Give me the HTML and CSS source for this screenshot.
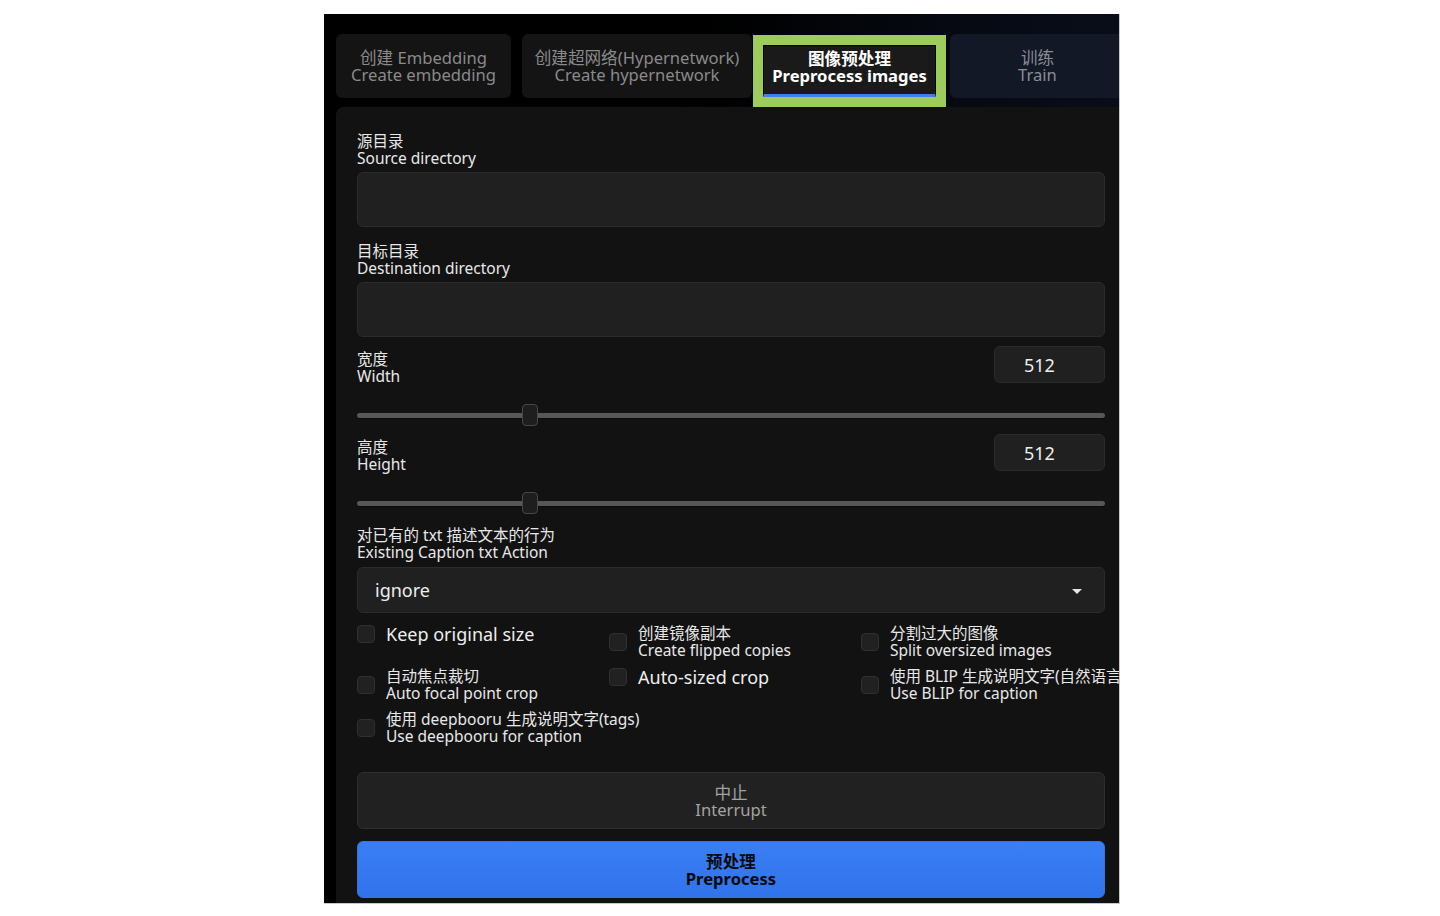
FILE: index.html
```html
<!DOCTYPE html>
<html lang="zh">
<head>
<meta charset="utf-8">
<title>Preprocess images</title>
<link rel="stylesheet" href="styles.css">
</head>
<body>
<div class="frame">
  <div class="tabs">
    <div class="tab tab-a"><span>创建 Embedding</span><span>Create embedding</span></div>
    <div class="tab tab-b"><span>创建超网络(Hypernetwork)</span><span>Create hypernetwork</span></div>
    <div class="tab-sel"><span>图像预处理</span><span>Preprocess images</span></div>
    <div class="tab tab-d"><span>训练</span><span>Train</span></div>
  </div>
  <div class="panel">
    <div class="field">
      <div class="label"><span>源目录</span><span>Source directory</span></div>
      <div class="textbox"></div>
    </div>
    <div class="field field-last">
      <div class="label"><span>目标目录</span><span>Destination directory</span></div>
      <div class="textbox"></div>
    </div>
    <div class="slider-block">
      <div class="slider-head">
        <div class="label label-top"><span>宽度</span><span>Width</span></div>
        <div class="numbox">512</div>
      </div>
      <div class="slider">
        <div class="track"></div>
        <div class="rail"><div class="thumb" style="left: 22.58%"></div></div>
      </div>
    </div>
    <div class="slider-block">
      <div class="slider-head">
        <div class="label label-top"><span>高度</span><span>Height</span></div>
        <div class="numbox">512</div>
      </div>
      <div class="slider">
        <div class="track"></div>
        <div class="rail"><div class="thumb" style="left: 22.58%"></div></div>
      </div>
    </div>
    <div class="field field-dd">
      <div class="label"><span>对已有的 txt 描述文本的行为</span><span>Existing Caption txt Action</span></div>
      <div class="dropdown"><span class="dd-value">ignore</span><span class="dd-arrow"></span></div>
    </div>
    <div class="checks">
      <div class="check"><span class="box"></span><span class="ck-single">Keep original size</span></div>
      <div class="check"><span class="box"></span><span class="ck-double"><span>创建镜像副本</span><span>Create flipped copies</span></span></div>
      <div class="check"><span class="box"></span><span class="ck-double"><span>分割过大的图像</span><span>Split oversized images</span></span></div>
      <div class="check"><span class="box"></span><span class="ck-double"><span>自动焦点裁切</span><span>Auto focal point crop</span></span></div>
      <div class="check"><span class="box"></span><span class="ck-single">Auto-sized crop</span></div>
      <div class="check"><span class="box"></span><span class="ck-double"><span>使用 BLIP 生成说明文字(自然语言)</span><span>Use BLIP for caption</span></span></div>
      <div class="check"><span class="box"></span><span class="ck-double"><span>使用 deepbooru 生成说明文字(tags)</span><span>Use deepbooru for caption</span></span></div>
    </div>
    <div class="btn btn-interrupt"><span>中止</span><span>Interrupt</span></div>
    <div class="btn btn-primary"><span>预处理</span><span>Preprocess</span></div>
  </div>
</div>
</body>
</html>
```
FILE: styles.css
```css
* { box-sizing: border-box; }
html, body { margin: 0; padding: 0; background: #ffffff; }
body {
  font-family: "Noto Sans", "Noto Sans CJK SC", sans-serif;
  color: #e6e6e6;
}
.frame {
  margin: 14px 0 0 324px;
  width: 796px;
  height: 890px;
  overflow: hidden;
  background: linear-gradient(90deg, #000000 0%, #000000 45%, #060a14 100%);
  border-right: 1px solid #c8c8c8;
  border-bottom: 1px solid #c8c8c8;
}
.tabs {
  display: flex;
  align-items: flex-start;
  height: 93px;
  padding: 20px 0 0 12px;
  background: linear-gradient(90deg, rgba(0,0,0,0) 0%, rgba(0,0,0,0) 55%, rgba(10,15,28,0.6) 100%);
}
.tab {
  flex: 0 0 auto;
  height: 64px;
  border-radius: 6px;
  display: flex;
  flex-direction: column;
  align-items: center;
  justify-content: center;
  font-size: 16.6px;
  line-height: 17px;
  color: #8a8a8a;
  background: #141414;
  white-space: nowrap;
}
.tab-a { width: 175px; }
.tab-b { width: 230px; margin-left: 11px; background: #141415; }
.tab-d { width: 175px; margin-left: 14px; background: #121826; color: #8a8d94; }
.tab-sel {
  flex: 0 0 auto;
  width: 173px;
  height: 52px;
  margin: 11px 0 0 11px;
  outline: 10px solid #9ccd5c;
  background: #1a1a1a;
  border: 1px solid #050505;
  border-bottom: 3px solid #3b7ff0;
  display: flex;
  flex-direction: column;
  align-items: center;
  justify-content: center;
  padding-bottom: 7px;
  font-size: 16.6px;
  line-height: 17px;
  font-weight: 700;
  color: #ffffff;
  white-space: nowrap;
}
.panel {
  margin-left: 12px;
  width: 790px;
  min-height: 800px;
  background: #121212;
  border-top-left-radius: 8px;
  padding: 24px 21px 0 21px;
}
.label {
  display: flex;
  flex-direction: column;
  font-size: 15.5px;
  line-height: 17px;
  color: #e8e8e8;
  white-space: nowrap;
}
.field { margin-bottom: 14px; }
.field-last { margin-bottom: 0; }
.field .label { padding-top: 2px; margin-bottom: 5px; }
.textbox {
  height: 55px;
  background: #202020;
  border: 1px solid #2b2b2b;
  border-radius: 6px;
}
.slider-block { padding-top: 9px; }
.slider-block + .slider-block { padding-top: 0; }
.slider-head {
  display: flex;
  justify-content: space-between;
  align-items: flex-start;
  height: 37px;
}
.label-top { padding-top: 5px; }
.numbox {
  width: 111px;
  height: 37px;
  background: #202020;
  border: 1px solid #2b2b2b;
  border-radius: 6px;
  display: flex;
  align-items: center;
  justify-content: flex-start;
  padding-left: 29px;
  font-size: 18px;
  color: #eeeeee;
}
.slider {
  position: relative;
  height: 22px;
  margin: 21px 0 8px 0;
}
.track {
  position: absolute;
  left: 0;
  right: 0;
  top: 9px;
  height: 5px;
  border-radius: 3px;
  background: #575757;
  box-shadow: 0 1px 0 #0a0a0a;
}
.rail {
  position: absolute;
  left: 0;
  right: 16px;
  top: 0;
  bottom: 0;
}
.thumb {
  position: absolute;
  top: 0;
  width: 16px;
  height: 22px;
  border-radius: 4px;
  background: #1e1e1e;
  border: 1px solid #484848;
}
.field-dd { padding-top: 3px; margin-bottom: 12px; }
.field-dd .label { padding-top: 2px; margin-bottom: 6px; }
.dropdown {
  height: 46px;
  background: #202020;
  border: 1px solid #2b2b2b;
  border-radius: 6px;
  display: flex;
  align-items: center;
  justify-content: space-between;
  padding: 0 22px 0 17px;
}
.dd-value { font-size: 18px; color: #eeeeee; }
.dd-arrow {
  width: 0;
  height: 0;
  border-left: 5px solid transparent;
  border-right: 5px solid transparent;
  border-top: 5px solid #e6e6e6;
  margin-top: 2px;
}
.checks {
  display: grid;
  grid-template-columns: 244px 244px 244px;
  column-gap: 8px;
  row-gap: 9px;
  align-items: start;
}
.check {
  display: flex;
  align-items: center;
  gap: 11px;
  white-space: nowrap;
}
.box {
  flex: 0 0 auto;
  width: 18px;
  height: 18px;
  border-radius: 4px;
  background: #212121;
  border: 1px solid #303030;
}
.ck-single { font-size: 18px; line-height: 18px; color: #eeeeee; }
.ck-double {
  display: flex;
  flex-direction: column;
  font-size: 15.5px;
  line-height: 17px;
  color: #e8e8e8;
}
.btn {
  height: 57px;
  border-radius: 6px;
  display: flex;
  flex-direction: column;
  align-items: center;
  justify-content: center;
  font-size: 16.6px;
  line-height: 17px;
}
.btn-interrupt {
  margin-top: 27px;
  background: #212121;
  border: 1px solid #2e2e2e;
  color: #a3a3a3;
}
.btn-primary {
  margin-top: 12px;
  background: linear-gradient(180deg, #3a7ef5 0%, #3073ea 100%);
  border: 1px solid #3b73d6;
  color: #0a0a0a;
  font-weight: 700;
}
```
